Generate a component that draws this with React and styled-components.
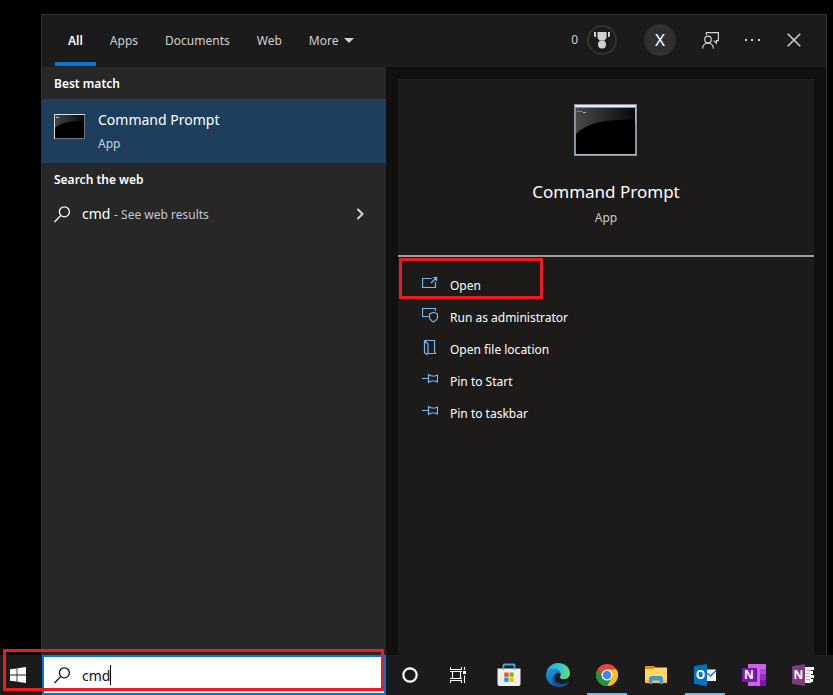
import React, { useState } from "react";
import styled, { createGlobalStyle, css } from "styled-components";

const GlobalStyle = createGlobalStyle`
  *, *::before, *::after { box-sizing: border-box; }
  body {
    margin: 0;
    background: #000;
    color: #fff;
    font-family: "Noto Sans", "Open Sans", sans-serif;
    font-size: 12px;
    line-height: 20px;
  }
  button, input { font: inherit; color: inherit; }
  svg { display: block; flex: none; }
`;

const Desktop = styled.div`
  min-height: 100vh;
  display: flex;
  flex-direction: column;
  padding-top: 14px;
  overflow: hidden;
`;

const Flyout = styled.main`
  flex: 1;
  display: flex;
  flex-direction: column;
  margin: 0 6px 0 41px;
  border: 1px solid #333;
  border-bottom: 0;
`;

const Header = styled.header`
  display: flex;
  align-items: center;
  justify-content: space-between;
  height: 52px;
  padding: 0 11px 0 13px;
  background: #1b1b1b;
`;

const Tabs = styled.nav`
  display: flex;
  gap: 1px;
  align-self: stretch;
`;

const bareButton = css`
  display: flex;
  align-items: center;
  border: 0;
  padding: 0;
  background: none;
  cursor: pointer;
`;

const Tab = styled.button`
  ${bareButton}
  gap: 6px;
  padding: 0 13px;
  margin-bottom: 1px;
  border-top: 4px solid transparent;
  border-bottom: 4px solid ${(p) => (p.$active ? "#0078d7" : "transparent")};
  color: ${(p) => (p.$active ? "#fff" : "#d0d0d0")};
  font-weight: ${(p) => (p.$active ? 600 : 400)};
`;

const HeaderTools = styled.div`
  display: flex;
  align-items: center;
  padding-bottom: 2px;
`;

const Rewards = styled.button`
  ${bareButton}
  gap: 9px;
  margin-right: 27px;
  color: #d0d0d0;
`;

const Medal = styled.span`
  display: grid;
  place-items: center;
  width: 30px;
  height: 30px;
  border: 2px solid #323232;
  border-radius: 50%;
`;

const Avatar = styled.button`
  ${bareButton}
  justify-content: center;
  width: 32px;
  height: 32px;
  margin-right: 13px;
  border-radius: 50%;
  background: #303030;
  font-size: 17px;
`;

const ToolButton = styled.button`
  ${bareButton}
  justify-content: center;
  width: 42px;
  height: 32px;
  color: #d0d0d0;
`;

const Panes = styled.div`
  flex: 1;
  display: grid;
  grid-template-columns: 344px minmax(0, 1fr);
`;

const Results = styled.section`
  background: #272727;
`;

const GroupTitle = styled.h2`
  margin: 0;
  padding: 7px 12px 5px;
  font-size: 12px;
  font-weight: 600;
`;

const BestMatch = styled.button`
  ${bareButton}
  align-items: flex-start;
  gap: 12px;
  width: 100%;
  height: 64px;
  padding: 11px 12px 0;
  background: #1d3f5d;
  text-align: left;
`;

const SmallIcon = styled.span`
  padding-top: 4px;
`;

const AppText = styled.span`
  display: grid;
  gap: 4px;
`;

const AppName = styled.span`
  font-size: 14px;
`;

const AppKind = styled.span`
  color: #cbd3da;
`;

const WebResult = styled.button`
  ${bareButton}
  gap: 12px;
  width: 100%;
  height: 38px;
  padding: 0 21px 0 12px;
`;

const Query = styled.span`
  flex: 1;
  text-align: left;
  font-size: 14px;
`;

const QueryHint = styled.span`
  color: #c8c8c8;
  font-size: 12px;
`;

const Preview = styled.section`
  display: flex;
  padding: 12px 12px 0;
  background: #11100f;
`;

const Card = styled.div`
  flex: 1;
  background: #1c1b1a;
`;

const Summary = styled.div`
  display: flex;
  flex-direction: column;
  align-items: center;
  height: 178px;
  padding-top: 25px;
  border-bottom: 2px solid #a19f9d;
`;

const SummaryName = styled.h1`
  margin: 22px 0 0;
  font-size: 17px;
  line-height: 28px;
  font-weight: 400;
`;

const SummaryKind = styled.p`
  margin: 2px 0 0;
  color: #c8c8c8;
`;

const Actions = styled.ul`
  list-style: none;
  margin: 0;
  padding: 13px 0;
`;

const ActionItem = styled.li`
  position: relative;
`;

const ActionButton = styled.button`
  ${bareButton}
  gap: 12px;
  width: 100%;
  height: 32px;
  padding: 0 24px;
`;

const ActionIcon = styled.span`
  padding-bottom: 6px;
`;

const Highlight = styled.span`
  position: absolute;
  border: 3px solid #ed1c24;
  pointer-events: none;
`;

const ActionHighlight = styled(Highlight)`
  top: -12px;
  left: 1px;
  width: 144px;
  height: 41px;
`;

const SearchHighlight = styled(Highlight)`
  inset: -6px 2px 4px 3px;
`;

const Taskbar = styled.footer`
  display: flex;
  height: 40px;
  background: #1b1b1b;
`;

const SearchArea = styled.div`
  position: relative;
  display: flex;
  flex: none;
  width: 386px;
`;

const StartButton = styled.button`
  ${bareButton}
  width: 42px;
  padding-left: 10px;
`;

const SearchBox = styled.label`
  flex: 1;
  display: flex;
  align-items: center;
  padding-left: 10px;
  border: 2px solid #0078d7;
  background: #fff;
  color: #111;
`;

const SearchInput = styled.input`
  field-sizing: content;
  margin-left: 12px;
  padding: 2px 0 0;
  border: 0;
  outline: 0;
  background: none;
  caret-color: transparent;
  font-size: 14px;
`;

const Caret = styled.span`
  width: 1px;
  height: 20px;
  background: #000;
`;

const TaskButton = styled.button`
  ${bareButton}
  flex: none;
  justify-content: center;
  width: 49px;
  background: ${(p) =>
    p.$running ? "linear-gradient(#76b9ed, #76b9ed) center bottom / 40px 2px no-repeat" : "none"};
`;

const LogoLetter = styled.text`
  fill: #fff;
  font-family: "Noto Sans", sans-serif;
  font-size: 12px;
  font-weight: 700;
  text-anchor: middle;
`;

const ConsoleIcon = ({ small }) => {
  const id = small ? "glossSmall" : "glossLarge";
  return small ? (
    <svg width="32" height="26" viewBox="0 0 32 26">
      <defs>
        <linearGradient id={id}>
          <stop stopColor="#444" />
          <stop offset="1" stopColor="#0b0b0b" />
        </linearGradient>
      </defs>
      <path fill="#777" d="M0 0h31v25H0z" />
      <path fill="#d8dce0" d="M0 0h31v1H0zM0 0h1v25H0z" />
      <path fill="#000" d="M1 1h29v23H1z" />
      <path fill={`url(#${id})`} d="M1 1h29v6C18 7 7 8 1 14z" />
      <path stroke="#bbb" d="M2 3.5h3" />
    </svg>
  ) : (
    <svg width="64" height="52" viewBox="0 0 64 52">
      <defs>
        <linearGradient id={id}>
          <stop stopColor="#494949" />
          <stop offset="1" stopColor="#080808" />
        </linearGradient>
      </defs>
      <path fill="#8c929b" d="M0 0h63v52H0z" />
      <path fill="#e6e9ee" d="M1 1h61v2H1z" />
      <path fill="#b3bac4" d="M61 2h1v17h-1zM1 50h61v1H1z" />
      <path fill="#000" d="M2 4h59v46H2z" />
      <path fill={`url(#${id})`} d="M2 4h59v12C35 15 14 18 2 30z" />
      <path stroke="#999" strokeDasharray="2 1" d="M3 7.5h6" />
      <path stroke="#aaa" d="M9 8.5h3" />
    </svg>
  );
};

const SearchIcon = () => (
  <svg width="16" height="17" viewBox="0 0 16 17" fill="none" stroke="currentColor" strokeWidth="1.3">
    <circle cx="10.4" cy="5.8" r="5" />
    <path d="M6.8 9.4.5 16" />
  </svg>
);

const MedalIcon = () => (
  <svg width="16" height="17" viewBox="0 0 16 17" fill="#d0d0d0">
    <path d="M0 0h2v5H1L0 4zM3.5 0h9v6l-2 2.5h-5L3.5 6zM14 0h2v4l-1 1h-1z" />
    <circle cx="8" cy="12.5" r="4" />
  </svg>
);

const FeedbackIcon = () => (
  <svg width="17" height="17" viewBox="0 0 17 17" fill="none" stroke="currentColor" strokeWidth="1.2">
    <path d="M4.5 3V.6h11.900v8h-2v2.600L11.600 8.600" />
    <circle cx="6" cy="7.500" r="3.300" />
    <path d="M.6 16.500c0-7.200 10.800-7.200 10.800 0" />
  </svg>
);

const DotsIcon = () => (
  <svg width="15" height="2" viewBox="0 0 15 2" fill="currentColor">
    <path d="M0 0h2v2H0zM6 0h2v2H6zM13 0h2v2h-2z" />
  </svg>
);

const CloseIcon = () => (
  <svg width="14" height="14" viewBox="0 0 14 14" stroke="currentColor" strokeWidth="1.5">
    <path d="m.7.7 12.6 12.6M13.3.7.7 13.3" />
  </svg>
);

const actionDrawings = {
  open: <path d="M9.5 3.5h-9v9h13V7M9 8l5.5-5.5M11 2.5h3.5V6" />,
  admin: (
    <>
      <path d="M6.5 9.5h-6v-8h13V4" />
      <path d="M11.5 5.3 7.5 7v3c0 2.6 1.8 3.8 4 5 2.2-1.2 4-2.4 4-5V7z" />
    </>
  ),
  folder: <path d="M2.500 1.500h10v10.500l1 2.500h-7M2.500 1.500v12.300l2.500 1.700 1-2V5L2.500 1.500" />,
  pin: <path d="M0 7.500h6.500M6.500 3v9M6.500 3.500l3 1.500h3.500l2.500-1v7l-2.500-1H9.500l-3 1.500" />,
};

const LineIcon = ({ name }) => (
  <svg width="16" height="17" viewBox="0 0 16 17" fill="none" stroke="#76b9ed" strokeWidth="1.2">
    {actionDrawings[name]}
  </svg>
);

const WindowsLogo = () => (
  <svg width="16" height="16" viewBox="0 0 16 16" fill="#fff">
    <path d="M0 2.3 6.6 1.4v6.2H0zM7.4 1.2 16 0v7.6H7.4zM0 8.4h6.6v6.2L0 13.7zM7.4 8.4H16V16l-8.6-1.2z" />
  </svg>
);

const CortanaIcon = () => (
  <svg width="17" height="16" viewBox="0 0 17 16" fill="none" stroke="#fff" strokeWidth="2.2">
    <circle cx="8" cy="8" r="6.7" />
  </svg>
);

const TaskViewIcon = () => (
  <svg width="19" height="16" viewBox="0 0 19 16" fill="none" stroke="#fff" strokeWidth="1.1">
    <path d="M.5 0v2.5h11V0M2.500 4.500h8v7h-8zM0 4.500h12M0 11.500h12M.5 16v-2.500h11V16M14.500 0v3M14.500 8.500V16" />
    <path fill="#fff" stroke="none" d="M13 4h3v3h-3z" />
  </svg>
);

const StoreIcon = () => (
  <svg width="24" height="24" viewBox="0 0 24 24">
    <path d="M6.500 8V2.500a1 1 0 0 1 1-1h9a1 1 0 0 1 1 1V8" fill="none" stroke="#29b6ec" strokeWidth="1.8" />
    <path fill="#f0f0f0" d="M.5 5.500h23V21a2 2 0 0 1-2 2h-19a2 2 0 0 1-2-2z" />
    <path fill="#1683c8" d="M5.600 5.500h1.800v1H5.600zM16.600 5.500h1.800v1h-1.800z" />
    <path fill="#f25022" d="M7.300 9.500h4.300v4.300H7.300z" />
    <path fill="#7fba00" d="M12.400 9.500h4.300v4.300h-4.300z" />
    <path fill="#00a4ef" d="M7.300 14.600h4.300v4.300H7.300z" />
    <path fill="#ffb900" d="M12.400 14.600h4.300v4.300h-4.300z" />
  </svg>
);

const EdgeIcon = () => (
  <svg width="24" height="24" viewBox="0 0 24 24">
    <defs>
      <linearGradient id="edgeTop" x1="0" y1=".3" x2="1" y2=".5">
        <stop stopColor="#24a8e0" />
        <stop offset=".55" stopColor="#35c3dc" />
        <stop offset="1" stopColor="#6bdc62" />
      </linearGradient>
      <linearGradient id="edgeSide" x1="0" y1="0" x2=".5" y2="1">
        <stop stopColor="#1b9de2" />
        <stop offset="1" stopColor="#1260b8" />
      </linearGradient>
    </defs>
    <path fill="url(#edgeTop)" d="M.3 10.5C1.2 4.3 6 0 12 0c7 0 12 4.8 12 10 0 4-3 6.2-6.300 6.200-3 0-4.300-1-3.800-2.200.6-1 .8-1.700.8-2.600C14.700 8.200 11.200 6 7.500 6 4 6 1.200 8 .3 10.500z" />
    <path fill="url(#edgeSide)" d="M.2 11C1.200 7.500 4 5.600 7.500 5.600c3.500 0 7.200 2.200 7.200 5.600-.8-1.100-2.200-1.700-3.700-1.200-3.500 1.200-4 5.500-1.500 8.500 1.600 2 4 3 7 3-2 1.700-4 2.400-6 2.100C4 22.600-.7 17 .2 11z" />
    <path fill="#154f99" d="M10 10.500c-2.700 2.800-2 6.700.6 8.700 3.300 2.600 8 2.300 11.600-.2.500-.3.800 0 .5.500C20 23.500 15 25 10.600 23.500 5.500 21.500 5 13.500 10 10.500z" />
  </svg>
);

const ChromeIcon = () => (
  <svg width="24" height="24" viewBox="0 0 24 24">
    <circle cx="12" cy="12" r="11" fill="#ea4335" />
    <path fill="#fbc116" d="M12 6.500h9.530A11 11 0 0 1 12 23l4.760-8.250z" />
    <path fill="#229342" d="M2.470 6.500A11 11 0 0 0 12 23l4.760-8.250h-9.520z" />
    <circle cx="12" cy="12" r="5.500" fill="#fff" />
    <circle cx="12" cy="12" r="4.300" fill="#4285f4" />
  </svg>
);

const ExplorerIcon = () => (
  <svg width="22" height="20" viewBox="0 0 22 20">
    <path fill="#dc9407" d="M0 1h9l1.500 2H21v3H0z" />
    <path fill="#ffd765" d="M0 4h8l2-1.500h12V18H0z" />
    <path fill="#f8c14a" d="M0 15h22v3H0z" />
    <path fill="#3f97d8" d="M4 12.500 6 11h10l2 1.500V19h-3.500v-3.500h-7V19H4z" />
  </svg>
);

const OutlookIcon = () => (
  <svg width="24" height="24" viewBox="0 0 24 24">
    <path fill="#fff" d="M13 6.500h10v11.500H13z" />
    <path fill="none" stroke="#1177ca" strokeWidth="1.400" d="M13 9.500l4.500 3.500L23 7.500" />
    <path fill="#0072c6" d="M1 3.200 14 1v22L1 20.800z" />
    <LogoLetter x="7.500" y="16.300">O</LogoLetter>
  </svg>
);

const OneNoteIcon = () => (
  <svg width="24" height="24" viewBox="0 0 24 24">
    <path fill="#ca64ea" d="M6 1h18v22H6z" />
    <path fill="#ae4bd5" d="M18 6h6v5h-6z" />
    <path fill="#9332bf" d="M18 11h6v6h-6z" />
    <path fill="#7719aa" d="M18 17h6v6h-6z" />
    <path fill="#5a1791" d="M6 5h8a1 1 0 0 1 1 1v13H6z" />
    <path fill="#7719aa" d="M0 5h14v14H0z" />
    <LogoLetter x="7" y="16.300">N</LogoLetter>
  </svg>
);

const OneNoteDesktopIcon = () => (
  <svg width="24" height="24" viewBox="0 0 24 24">
    <path fill="#fff" d="M13 4h7v16h-7zM20 4h3v3h-3zM20 8h2v3h-2zM20 12h3v3h-3zM20 16h2v3h-2z" />
    <path fill="none" stroke="#c9a8c8" d="M15 7.500h4M15 10.500h4M15 13.500h4M15 16.500h4" />
    <path fill="#80397b" d="M1 3.200 14 1v22L1 20.800z" />
    <LogoLetter x="7.500" y="16.300">N</LogoLetter>
  </svg>
);

const tabs = ["All", "Apps", "Documents", "Web", "More"];

const actions = [
  { icon: "open", label: "Open", highlighted: true },
  { icon: "admin", label: "Run as administrator" },
  { icon: "folder", label: "Open file location" },
  { icon: "pin", label: "Pin to Start" },
  { icon: "pin", label: "Pin to taskbar" },
];

const taskButtons = [
  { label: "Cortana", Icon: CortanaIcon },
  { label: "Task View", Icon: TaskViewIcon },
  { label: "Microsoft Store", Icon: StoreIcon },
  { label: "Microsoft Edge", Icon: EdgeIcon },
  { label: "Google Chrome", Icon: ChromeIcon, running: true },
  { label: "File Explorer", Icon: ExplorerIcon },
  { label: "Outlook", Icon: OutlookIcon, running: true },
  { label: "OneNote for Windows 10", Icon: OneNoteIcon },
  { label: "OneNote", Icon: OneNoteDesktopIcon },
];

export default function App() {
  const [activeTab, setActiveTab] = useState("All");
  const [query, setQuery] = useState("cmd");

  return (
    <Desktop>
      <GlobalStyle />
      <Flyout>
        <Header>
          <Tabs>
            {tabs.map((tab) => (
              <Tab key={tab} $active={tab === activeTab} onClick={() => setActiveTab(tab)}>
                {tab}
                {tab === "More" && (
                  <svg width="10" height="5" viewBox="0 0 10 5" fill="currentColor">
                    <path d="M0 0h10L5 5z" />
                  </svg>
                )}
              </Tab>
            ))}
          </Tabs>
          <HeaderTools>
            <Rewards>
              0
              <Medal><MedalIcon /></Medal>
            </Rewards>
            <Avatar>X</Avatar>
            <ToolButton aria-label="Feedback"><FeedbackIcon /></ToolButton>
            <ToolButton aria-label="Options"><DotsIcon /></ToolButton>
            <ToolButton aria-label="Close"><CloseIcon /></ToolButton>
          </HeaderTools>
        </Header>
        <Panes>
          <Results>
            <GroupTitle>Best match</GroupTitle>
            <BestMatch>
              <SmallIcon><ConsoleIcon small /></SmallIcon>
              <AppText>
                <AppName>Command Prompt</AppName>
                <AppKind>App</AppKind>
              </AppText>
            </BestMatch>
            <GroupTitle>Search the web</GroupTitle>
            <WebResult>
              <SearchIcon />
              <Query>
                cmd <QueryHint>- See web results</QueryHint>
              </Query>
              <svg width="9" height="12" viewBox="0 0 9 12" fill="none" stroke="#d8d8d8" strokeWidth="2">
                <path d="m1.500 1 5 5-5 5" />
              </svg>
            </WebResult>
          </Results>
          <Preview>
            <Card>
              <Summary>
                <ConsoleIcon />
                <SummaryName>Command Prompt</SummaryName>
                <SummaryKind>App</SummaryKind>
              </Summary>
              <Actions>
                {actions.map(({ icon, label, highlighted }) => (
                  <ActionItem key={label}>
                    <ActionButton>
                      <ActionIcon><LineIcon name={icon} /></ActionIcon>
                      {label}
                    </ActionButton>
                    {highlighted && <ActionHighlight />}
                  </ActionItem>
                ))}
              </Actions>
            </Card>
          </Preview>
        </Panes>
      </Flyout>
      <Taskbar>
        <SearchArea>
          <StartButton aria-label="Start"><WindowsLogo /></StartButton>
          <SearchBox>
            <SearchIcon />
            <SearchInput
              aria-label="Search"
              value={query}
              onChange={(event) => setQuery(event.target.value)}
            />
            <Caret />
          </SearchBox>
          <SearchHighlight />
        </SearchArea>
        {taskButtons.map(({ label, Icon, running }) => (
          <TaskButton key={label} aria-label={label} $running={running}>
            <Icon />
          </TaskButton>
        ))}
      </Taskbar>
    </Desktop>
  );
}
